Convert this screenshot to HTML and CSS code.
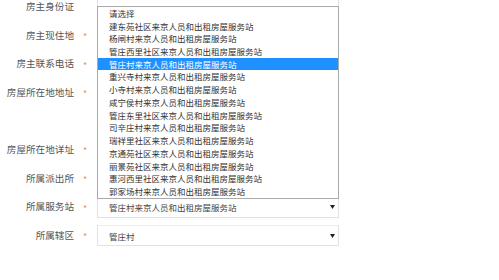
FILE: index.html
```html
<!DOCTYPE html>
<html lang="zh">
<head>
<meta charset="utf-8">
<title>房屋信息</title>
<link rel="stylesheet" href="styles.css">
</head>
<body>
<form class="form">
  <div class="row">
    <label class="label">房主身份证</label><span class="star"></span>
    <div class="field"></div>
  </div>
  <div class="row">
    <label class="label">房主现住地</label><span class="star">*</span>
    <div class="field"></div>
  </div>
  <div class="row">
    <label class="label">房主联系电话</label><span class="star">*</span>
    <div class="field"></div>
  </div>
  <div class="row">
    <label class="label">房屋所在地地址</label><span class="star">*</span>
    <div class="field"></div>
  </div>
  <div class="row">
    <span class="label"></span><span class="star"></span>
    <div class="field"></div>
  </div>
  <div class="row">
    <label class="label">房屋所在地详址</label><span class="star">*</span>
    <div class="field"></div>
  </div>
  <div class="row">
    <label class="label">所属派出所</label><span class="star">*</span>
    <div class="field"></div>
  </div>
  <div class="row">
    <label class="label">所属服务站</label><span class="star">*</span>
    <div class="field select open">
      <span>管庄村来京人员和出租房屋服务站</span>
      <svg class="arrow" width="5" height="4" viewBox="0 0 5 4"><path d="M0 0H5L2.5 4Z" fill="#222"/></svg>
      <ul class="options">
        <li>请选择</li>
        <li>建东苑社区来京人员和出租房屋服务站</li>
        <li>杨闸村来京人员和出租房屋服务站</li>
        <li>管庄西里社区来京人员和出租房屋服务站</li>
        <li class="active">管庄村来京人员和出租房屋服务站</li>
        <li>重兴寺村来京人员和出租房屋服务站</li>
        <li>小寺村来京人员和出租房屋服务站</li>
        <li>咸宁侯村来京人员和出租房屋服务站</li>
        <li>管庄东里社区来京人员和出租房屋服务站</li>
        <li>司辛庄村来京人员和出租房屋服务站</li>
        <li>瑞祥里社区来京人员和出租房屋服务站</li>
        <li>京通苑社区来京人员和出租房屋服务站</li>
        <li>丽景苑社区来京人员和出租房屋服务站</li>
        <li>惠河西里社区来京人员和出租房屋服务站</li>
        <li>郭家场村来京人员和出租房屋服务站</li>
      </ul>
    </div>
  </div>
  <div class="row">
    <label class="label">所属辖区</label><span class="star">*</span>
    <div class="field select">
      <span>管庄村</span>
      <svg class="arrow" width="5" height="4" viewBox="0 0 5 4"><path d="M0 0H5L2.5 4Z" fill="#222"/></svg>
    </div>
  </div>
</form>
</body>
</html>
```

FILE: styles.css
```css
html, body {
  margin: 0;
  padding: 0;
  background: #ffffff;
}

body {
  font-family: "Noto Sans CJK SC", "Noto Sans", sans-serif;
  width: 499px;
  height: 280px;
  overflow: hidden;
}

.form {
  display: flex;
  flex-direction: column;
  margin: -7.3px 0 0 0;
}

.row {
  display: grid;
  grid-template-columns: 74px 23px 242px;
  height: 28.6px;
  align-items: center;
}

.label {
  font-size: 9.6px;
  line-height: 1;
  color: #555555;
  text-align: right;
  white-space: nowrap;
}

.star {
  font-size: 9px;
  line-height: 1;
  color: #f0905a;
  padding-left: 9px;
  padding-top: 2px;
}

.field {
  position: relative;
  height: 21px;
  box-sizing: border-box;
  border: 1px solid #e2e2e2;
  background: #ffffff;
}

.select {
  display: flex;
  align-items: center;
  justify-content: space-between;
  padding: 0 3px 0 11px;
  font-size: 8.5px;
  color: #444444;
  border-top-color: #ececec;
}

.arrow {
  display: block;
}

.options {
  position: absolute;
  left: -1px;
  right: -1px;
  bottom: 100%;
  margin: 0 0 -1px 0;
  padding: 0;
  list-style: none;
  border: 1px solid #aaaaaa;
  background: #ffffff;
}

.options li {
  height: 12.73px;
  line-height: 12.73px;
  padding-left: 11px;
  font-size: 8.5px;
  color: #333333;
  white-space: nowrap;
}

.options li.active {
  background: #1e90ff;
  color: #ffffff;
}
```
